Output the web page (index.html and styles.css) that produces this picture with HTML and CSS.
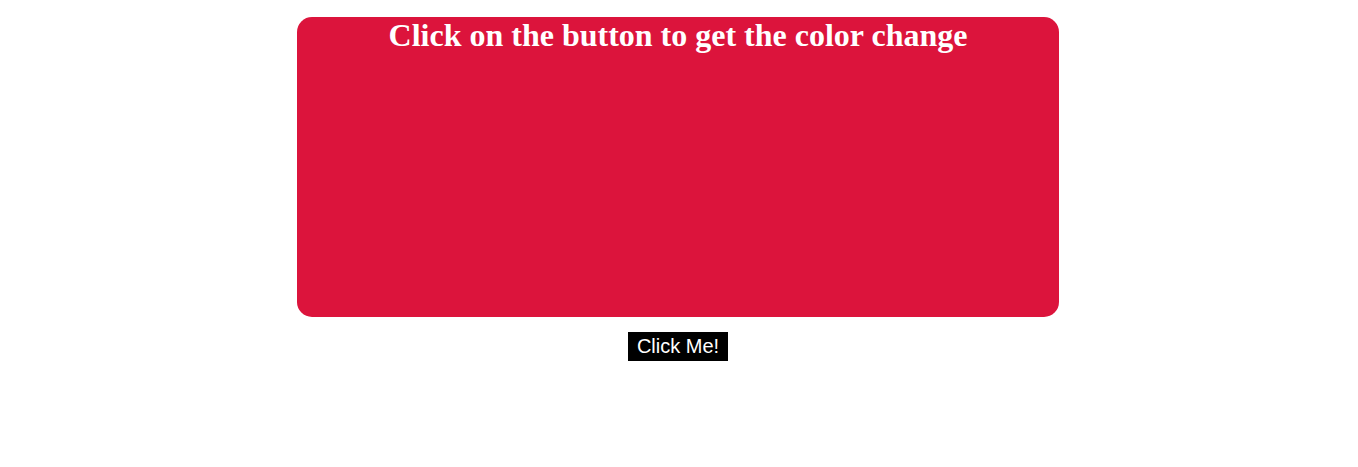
FILE: index.html
```html
<!DOCTYPE html>
<html>
<head>
<meta charset="utf-8">
<link rel="stylesheet" href="styles.css">
</head>
<body>
<main class="page">
  <section class="box">
    <h1 class="title">Click on the button to get the color change</h1>
  </section>
  <button class="btn" type="button">Click Me!</button>
</main>
</body>
</html>
```

FILE: styles.css
```css
html, body {
  margin: 0;
  padding: 0;
  background: #ffffff;
}
.page {
  display: flex;
  flex-direction: column;
  align-items: center;
  padding: 17px 2px 0 0;
  gap: 15px;
}
.box {
  width: 762px;
  height: 300px;
  background: #dc143c;
  border-radius: 15px;
  box-sizing: border-box;
}
.title {
  margin: 0;
  text-align: center;
  color: #ffffff;
  font-family: "Liberation Serif", "Times New Roman", serif;
  font-weight: bold;
  font-size: 32px;
  line-height: 37px;
}
.btn {
  width: 100px;
  height: 29px;
  padding: 0;
  border: none;
  background: #000000;
  color: #ffffff;
  font-family: "Liberation Sans", Arial, sans-serif;
  font-size: 20px;
  line-height: 29px;
  cursor: pointer;
}
```
